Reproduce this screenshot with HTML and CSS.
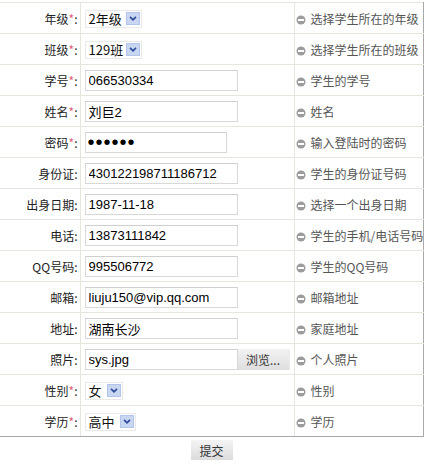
FILE: index.html
```html
<!DOCTYPE html>
<html lang="zh-CN">
<head>
<meta charset="utf-8">
<title>学生信息</title>
<link rel="stylesheet" href="styles.css">
</head>
<body>
<form class="form">
  <table class="grid">
    <colgroup><col class="c-label"><col class="c-field"><col class="c-hint"></colgroup>
    <tr>
      <td class="label">年级<span class="req">*</span>:</td>
      <td class="field"><span class="sel sel-wide"><span class="sel-text">2年级</span><span class="arrow"><svg viewBox="0 0 14 13" width="14" height="13"><path d="M3.5 4.5 L7 8 L10.5 4.5" fill="none" stroke="#2c4a9a" stroke-width="2"/></svg></span></span></td>
      <td class="hint"><svg class="ico" viewBox="0 0 10 10" width="10" height="10"><circle cx="5" cy="5" r="4.5" fill="#9c9c9c"/><rect x="2" y="4" width="6" height="2" fill="#fff"/></svg>选择学生所在的年级</td>
    </tr>
    <tr>
      <td class="label">班级<span class="req">*</span>:</td>
      <td class="field"><span class="sel sel-wide"><span class="sel-text">129班</span><span class="arrow"><svg viewBox="0 0 14 13" width="14" height="13"><path d="M3.5 4.5 L7 8 L10.5 4.5" fill="none" stroke="#2c4a9a" stroke-width="2"/></svg></span></span></td>
      <td class="hint"><svg class="ico" viewBox="0 0 10 10" width="10" height="10"><circle cx="5" cy="5" r="4.5" fill="#9c9c9c"/><rect x="2" y="4" width="6" height="2" fill="#fff"/></svg>选择学生所在的班级</td>
    </tr>
    <tr>
      <td class="label">学号<span class="req">*</span>:</td>
      <td class="field"><input class="text" type="text" value="066530334"></td>
      <td class="hint"><svg class="ico" viewBox="0 0 10 10" width="10" height="10"><circle cx="5" cy="5" r="4.5" fill="#9c9c9c"/><rect x="2" y="4" width="6" height="2" fill="#fff"/></svg>学生的学号</td>
    </tr>
    <tr>
      <td class="label">姓名<span class="req">*</span>:</td>
      <td class="field"><input class="text" type="text" value="刘巨2"></td>
      <td class="hint"><svg class="ico" viewBox="0 0 10 10" width="10" height="10"><circle cx="5" cy="5" r="4.5" fill="#9c9c9c"/><rect x="2" y="4" width="6" height="2" fill="#fff"/></svg>姓名</td>
    </tr>
    <tr>
      <td class="label">密码<span class="req">*</span>:</td>
      <td class="field"><input class="text text-pw" type="password" value="123456"></td>
      <td class="hint"><svg class="ico" viewBox="0 0 10 10" width="10" height="10"><circle cx="5" cy="5" r="4.5" fill="#9c9c9c"/><rect x="2" y="4" width="6" height="2" fill="#fff"/></svg>输入登陆时的密码</td>
    </tr>
    <tr>
      <td class="label">身份证:</td>
      <td class="field"><input class="text" type="text" value="430122198711186712"></td>
      <td class="hint"><svg class="ico" viewBox="0 0 10 10" width="10" height="10"><circle cx="5" cy="5" r="4.5" fill="#9c9c9c"/><rect x="2" y="4" width="6" height="2" fill="#fff"/></svg>学生的身份证号码</td>
    </tr>
    <tr>
      <td class="label">出身日期:</td>
      <td class="field"><input class="text" type="text" value="1987-11-18"></td>
      <td class="hint"><svg class="ico" viewBox="0 0 10 10" width="10" height="10"><circle cx="5" cy="5" r="4.5" fill="#9c9c9c"/><rect x="2" y="4" width="6" height="2" fill="#fff"/></svg>选择一个出身日期</td>
    </tr>
    <tr>
      <td class="label">电话:</td>
      <td class="field"><input class="text" type="text" value="13873111842"></td>
      <td class="hint"><svg class="ico" viewBox="0 0 10 10" width="10" height="10"><circle cx="5" cy="5" r="4.5" fill="#9c9c9c"/><rect x="2" y="4" width="6" height="2" fill="#fff"/></svg>学生的手机/电话号码</td>
    </tr>
    <tr>
      <td class="label">QQ号码:</td>
      <td class="field"><input class="text" type="text" value="995506772"></td>
      <td class="hint"><svg class="ico" viewBox="0 0 10 10" width="10" height="10"><circle cx="5" cy="5" r="4.5" fill="#9c9c9c"/><rect x="2" y="4" width="6" height="2" fill="#fff"/></svg>学生的QQ号码</td>
    </tr>
    <tr>
      <td class="label">邮箱:</td>
      <td class="field"><input class="text" type="text" value="liuju150@vip.qq.com"></td>
      <td class="hint"><svg class="ico" viewBox="0 0 10 10" width="10" height="10"><circle cx="5" cy="5" r="4.5" fill="#9c9c9c"/><rect x="2" y="4" width="6" height="2" fill="#fff"/></svg>邮箱地址</td>
    </tr>
    <tr>
      <td class="label">地址:</td>
      <td class="field"><input class="text" type="text" value="湖南长沙"></td>
      <td class="hint"><svg class="ico" viewBox="0 0 10 10" width="10" height="10"><circle cx="5" cy="5" r="4.5" fill="#9c9c9c"/><rect x="2" y="4" width="6" height="2" fill="#fff"/></svg>家庭地址</td>
    </tr>
    <tr>
      <td class="label">照片:</td>
      <td class="field"><span class="file"><input class="text" type="text" value="sys.jpg"><span class="browse">浏览...</span></span></td>
      <td class="hint"><svg class="ico" viewBox="0 0 10 10" width="10" height="10"><circle cx="5" cy="5" r="4.5" fill="#9c9c9c"/><rect x="2" y="4" width="6" height="2" fill="#fff"/></svg>个人照片</td>
    </tr>
    <tr>
      <td class="label">性别<span class="req">*</span>:</td>
      <td class="field"><span class="sel sel-sex"><span class="sel-text">女</span><span class="arrow"><svg viewBox="0 0 14 13" width="14" height="13"><path d="M3.5 4.5 L7 8 L10.5 4.5" fill="none" stroke="#2c4a9a" stroke-width="2"/></svg></span></span></td>
      <td class="hint"><svg class="ico" viewBox="0 0 10 10" width="10" height="10"><circle cx="5" cy="5" r="4.5" fill="#9c9c9c"/><rect x="2" y="4" width="6" height="2" fill="#fff"/></svg>性别</td>
    </tr>
    <tr>
      <td class="label">学历<span class="req">*</span>:</td>
      <td class="field"><span class="sel sel-edu"><span class="sel-text">高中</span><span class="arrow"><svg viewBox="0 0 14 13" width="14" height="13"><path d="M3.5 4.5 L7 8 L10.5 4.5" fill="none" stroke="#2c4a9a" stroke-width="2"/></svg></span></span></td>
      <td class="hint"><svg class="ico" viewBox="0 0 10 10" width="10" height="10"><circle cx="5" cy="5" r="4.5" fill="#9c9c9c"/><rect x="2" y="4" width="6" height="2" fill="#fff"/></svg>学历</td>
    </tr>
  </table>
  <div class="actions"><button class="submit" type="button">提交</button></div>
</form>
</body>
</html>
```

FILE: styles.css
```css
html, body {
  margin: 0;
  padding: 0;
  background: #fff;
}
body {
  font-family: "Noto Sans CJK SC", "Liberation Sans", sans-serif;
  font-size: 12px;
  color: #222;
}
.form {
  width: 423px;
  padding-top: 2px;
}
.grid {
  border-collapse: collapse;
  table-layout: fixed;
  width: 423px;
}
.c-label { width: 80px; }
.c-field { width: 214px; }
.c-hint { width: 129px; }
.grid td {
  height: 30px;
  padding: 0;
  border-top: 1px solid #e6e6de;
  border-bottom: 1px solid #e6e6de;
  vertical-align: middle;
  white-space: nowrap;
  overflow: hidden;
}
.grid td.label {
  text-align: right;
  padding-right: 2px;
  border-right: 1px solid #e6e6de;
  color: #222;
}
.req {
  color: #e0607a;
}
.grid td.field {
  padding-left: 4px;
  border-right: 1px solid #e6e6de;
}
.grid td.hint {
  padding-left: 1px;
  border-right: 1px solid #a9a9a9;
  color: #555;
}
.grid tr:last-child td {
  border-bottom: 1px solid #a9a9a9;
}
.ico {
  vertical-align: -1px;
  margin-right: 5px;
}
.text {
  box-sizing: border-box;
  width: 153px;
  height: 21px;
  margin: 0;
  padding: 0 3px;
  border: 1px solid #d8d8d8;
  border-top-color: #cfcfcf;
  background: #fff;
  font-family: "Liberation Sans", "Noto Sans CJK SC", sans-serif;
  font-size: 13px;
  color: #000;
  vertical-align: middle;
  outline: none;
}
.text-pw {
  width: 142px;
  font-size: 20px;
  letter-spacing: 1px;
  padding: 0 2px;
}
.sel {
  display: inline-flex;
  align-items: center;
  justify-content: space-between;
  box-sizing: border-box;
  height: 18px;
  padding: 0 1px 0 3px;
  border: 1px solid #e9e9e9;
  background: #fff;
  font-size: 13px;
  color: #111;
  vertical-align: middle;
}
.sel-wide { width: 57px; }
.sel-sex { width: 38px; }
.sel-edu { width: 51px; }
.sel-text {
  line-height: 16px;
}
.arrow {
  display: inline-flex;
  width: 14px;
  height: 13px;
  background: #c8d6f2;
  border: 1px solid #b3c5ea;
  box-sizing: border-box;
}
.arrow svg {
  width: 12px;
  height: 11px;
}
.file {
  display: inline-flex;
  align-items: center;
  vertical-align: middle;
}
.browse {
  box-sizing: border-box;
  display: inline-flex;
  align-items: center;
  justify-content: center;
  width: 52px;
  height: 21px;
  background: linear-gradient(#f2f2f2, #dedede);
  border-right: 1px solid #ececec;
  color: #333;
  font-size: 12px;
}
.actions {
  width: 423px;
  display: flex;
  justify-content: center;
  padding-top: 3px;
}
.submit {
  width: 42px;
  height: 20px;
  margin: 0;
  padding: 0;
  border: none;
  background: linear-gradient(#f4f4f4, #dcdcdc);
  font-family: "Noto Sans CJK SC", sans-serif;
  font-size: 12px;
  color: #333;
}
```
